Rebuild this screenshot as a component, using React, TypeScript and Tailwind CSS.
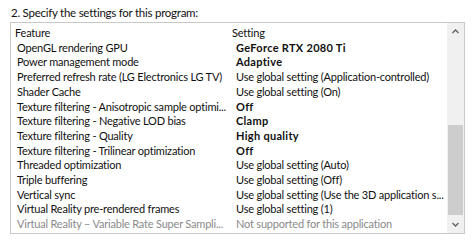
import React from "react";

type Row = {
  feature: string;
  setting: string;
  bold?: boolean;
  disabled?: boolean;
};

const ROWS: Row[] = [
  { feature: "OpenGL rendering GPU", setting: "GeForce RTX 2080 Ti", bold: true },
  { feature: "Power management mode", setting: "Adaptive", bold: true },
  { feature: "Preferred refresh rate (LG Electronics LG TV)", setting: "Use global setting (Application-controlled)" },
  { feature: "Shader Cache", setting: "Use global setting (On)" },
  { feature: "Texture filtering - Anisotropic sample optimi...", setting: "Off", bold: true },
  { feature: "Texture filtering - Negative LOD bias", setting: "Clamp", bold: true },
  { feature: "Texture filtering - Quality", setting: "High quality", bold: true },
  { feature: "Texture filtering - Trilinear optimization", setting: "Off", bold: true },
  { feature: "Threaded optimization", setting: "Use global setting (Auto)" },
  { feature: "Triple buffering", setting: "Use global setting (Off)" },
  { feature: "Vertical sync", setting: "Use global setting (Use the 3D application s..." },
  { feature: "Virtual Reality pre-rendered frames", setting: "Use global setting (1)" },
  {
    feature: "Virtual Reality \u2013 Variable Rate Super Sampli...",
    setting: "Not supported for this application",
    disabled: true,
  },
];

function Chevron({ up }: { up?: boolean }) {
  return (
    <svg width="7" height="5" viewBox="0 0 7 5" className="text-[#606060]">
      <path
        d={up ? "M0.5 4 L3.5 1 L6.5 4" : "M0.5 1 L3.5 4 L6.5 1"}
        fill="none"
        stroke="currentColor"
        strokeWidth="1.3"
      />
    </svg>
  );
}

export default function App() {
  return (
    <div className="w-[474px] h-[245px] bg-white text-[#111] font-['Lato',sans-serif] text-[11px] tracking-[-0.2px]">
      <div className="pl-[11px] pt-[5px] h-[22px] text-[11.5px] tracking-[-0.25px] leading-[16px]">
        2. Specify the settings for this program:
      </div>
      <div className="ml-[10px] w-[455px] h-[212px] border border-[#c8c8c8] flex">
        {/* list */}
        <div className="flex-1 min-w-0 pt-[3px] leading-[14.7px] overflow-hidden">
          <div className="flex">
            <div className="w-[217px] shrink-0 pl-[4px]">Feature</div>
            <div className="pl-[4px]">Setting</div>
          </div>
          {ROWS.map((r) => (
            <div key={r.feature} className={"flex whitespace-nowrap " + (r.disabled ? "text-[#8a8a8a]" : "")}>
              <div className="w-[217px] shrink-0 pl-[6px] overflow-hidden">{r.feature}</div>
              <div className={"pl-[8px] " + (r.bold ? "font-bold tracking-[0.3px]" : "")}>{r.setting}</div>
            </div>
          ))}
        </div>
        {/* scrollbar */}
        <div className="w-[17px] shrink-0 bg-[#f0f0f0] flex flex-col items-center">
          <div className="h-[17px] flex items-center justify-center">
            <Chevron up />
          </div>
          <div className="flex-1 w-full">
            <div className="h-[85px]" />
            <div className="h-[90px] mx-[1px] bg-[#cdcdcd]" />
          </div>
          <div className="h-[17px] flex items-center justify-center">
            <Chevron />
          </div>
        </div>
      </div>
    </div>
  );
}
